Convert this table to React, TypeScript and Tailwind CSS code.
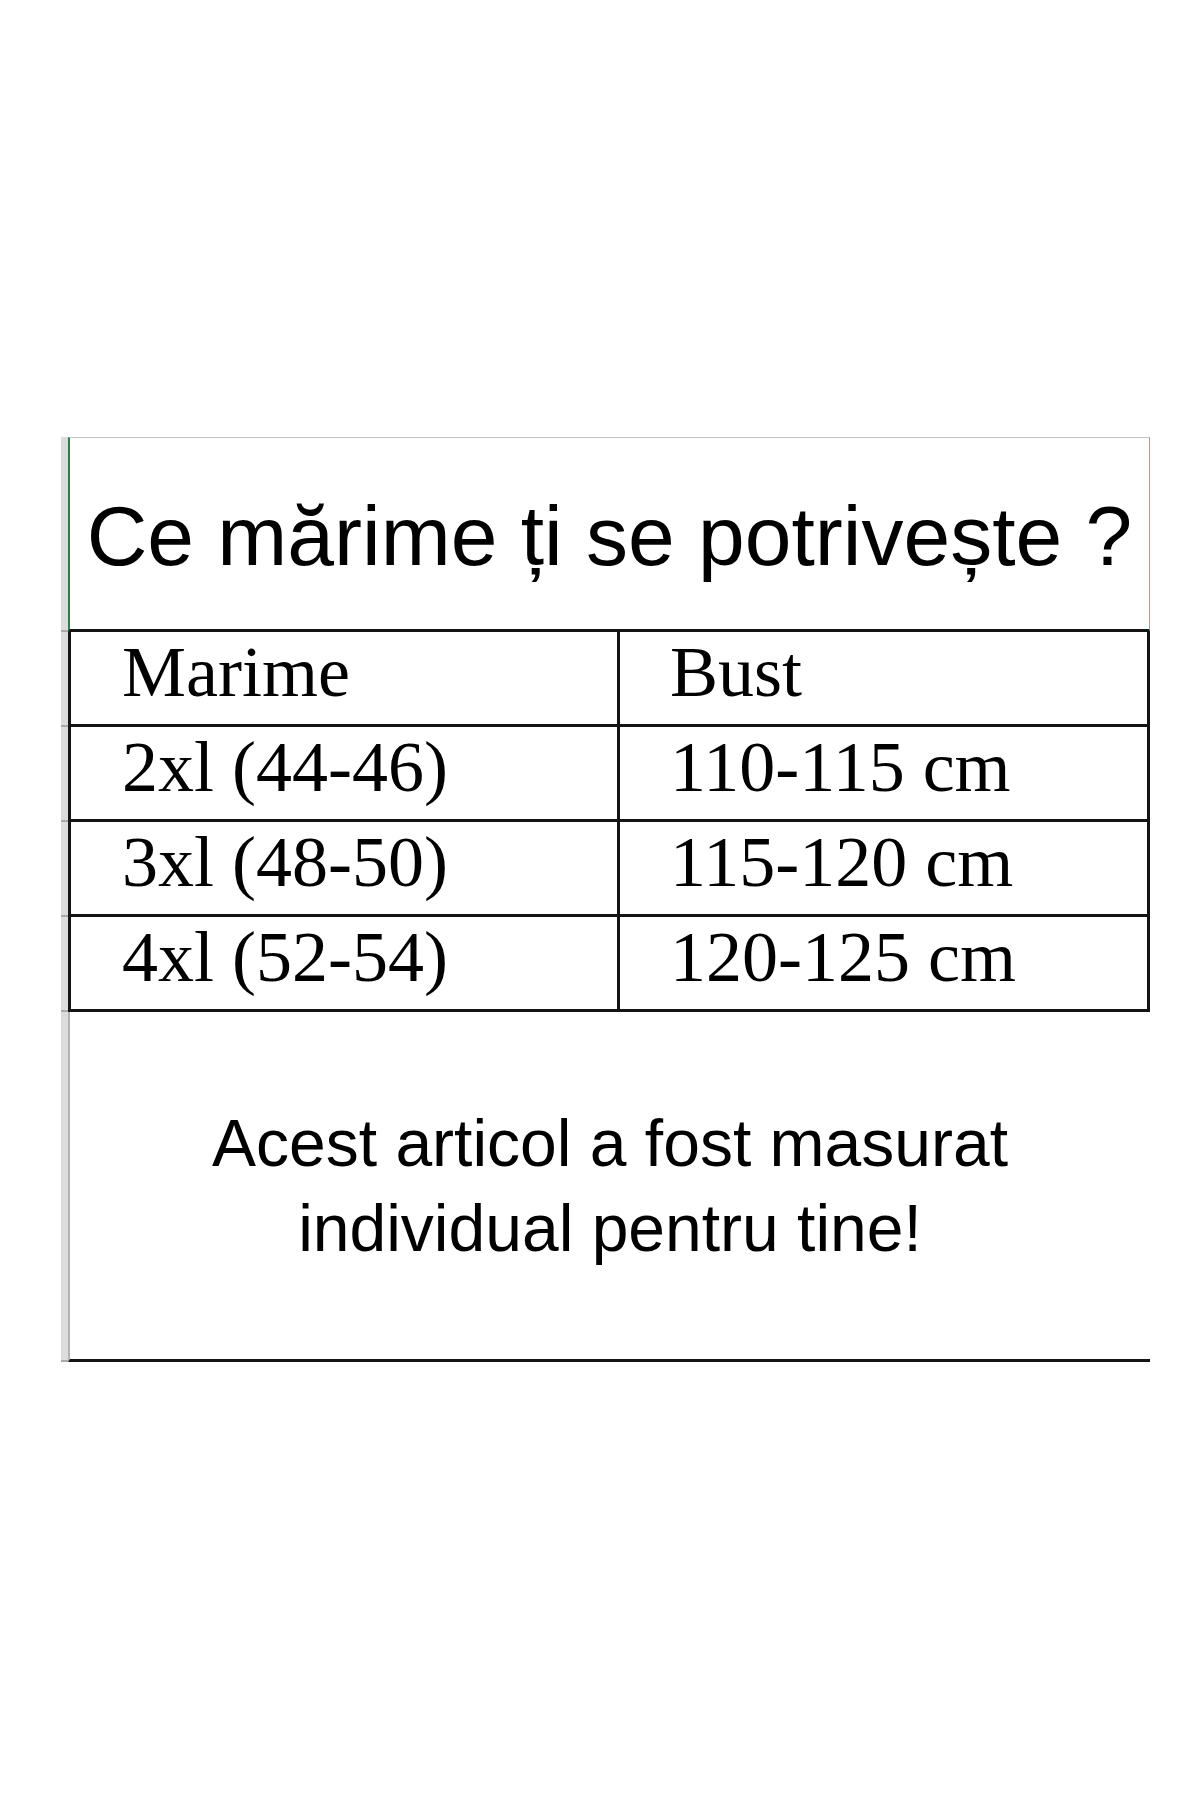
const rows = [
  { size: '2xl (44-46)', bust: '110-115 cm' },
  { size: '3xl (48-50)', bust: '115-120 cm' },
  { size: '4xl (52-54)', bust: '120-125 cm' },
]

const sans = { fontFamily: '"Liberation Sans", Arial, sans-serif' }
const serif = { fontFamily: '"Liberation Serif", "Times New Roman", serif' }

function Row({ left, right }: { left: string; right: string }) {
  return (
    <div className="flex h-[95px] border-b-[3px] border-[#141414]">
      <div
        className="flex w-[552px] items-center border-l-[3px] border-r-[3px] border-[#141414] pb-[12px] pl-[51px] text-[72px] leading-none text-black"
        style={serif}
      >
        {left}
      </div>
      <div
        className="flex flex-1 items-center border-r-[3px] border-[#141414] pb-[12px] pl-[50px] text-[72px] leading-none text-black"
        style={serif}
      >
        {right}
      </div>
    </div>
  )
}

export default function App() {
  return (
    <div className="h-[1800px] w-[1200px] bg-white pl-[61px] pt-[437px]">
      <div className="flex w-[1089px]">
        {/* spreadsheet row-header strip */}
        <div className="flex w-[7px] flex-col bg-[#dcdcdc]">
          <div className="h-[195px] border-b-2 border-[#a8a8a8]" />
          <div className="h-[95px] border-b-2 border-[#a8a8a8]" />
          <div className="h-[95px] border-b-2 border-[#a8a8a8]" />
          <div className="h-[95px] border-b-2 border-[#a8a8a8]" />
          <div className="h-[95px] border-b-2 border-[#a8a8a8]" />
          <div className="h-[350px] border-b-2 border-[#a8a8a8]" />
        </div>

        <div className="flex w-[1082px] flex-col">
          {/* Title */}
          <div
            className="flex h-[195px] items-center justify-center border-b-[3px] border-l-2 border-r border-t border-b-[#141414] border-l-[#2f7d4c] border-r-[#7fb490] border-t-[#c4c4c4] pt-[5px] text-[84px] leading-none text-black"
            style={sans}
          >
            Ce mărime ți se potrivește ?
          </div>

          <Row left="Marime" right="Bust" />
          {rows.map((r) => (
            <Row key={r.size} left={r.size} right={r.bust} />
          ))}

          {/* Note */}
          <div
            className="h-[350px] border-b-[3px] border-l-2 border-b-[#141414] border-l-[#b4b4b4] pt-[89px] text-center text-[66px] leading-[85px] text-black"
            style={sans}
          >
            <p>Acest articol a fost masurat</p>
            <p>individual pentru tine!</p>
          </div>
        </div>
      </div>
    </div>
  )
}
